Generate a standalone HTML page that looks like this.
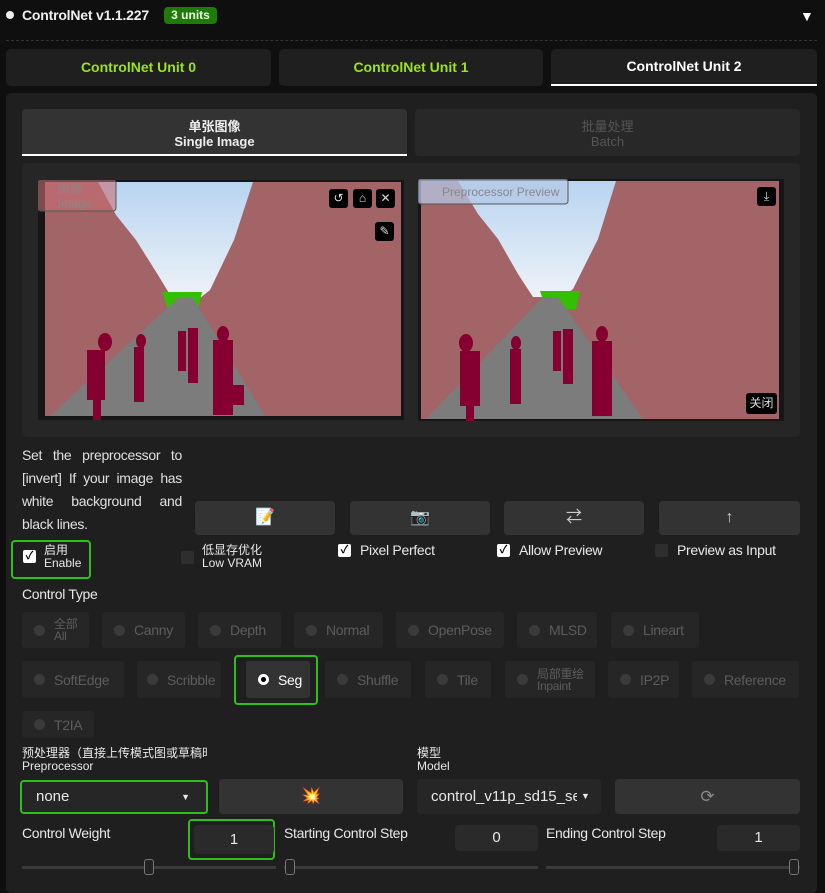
<!DOCTYPE html>
<html><head><meta charset="utf-8"><style>
*{box-sizing:border-box;margin:0;padding:0}
body{width:825px;height:881px;background:#0f0f0f;font-family:"Liberation Sans","Noto Sans CJK SC",sans-serif;color:#e8e8e8;position:relative;overflow:hidden}
.a{position:absolute}
.tab{position:absolute;top:49px;height:37px;background:#1f1f1f;border-radius:5px;color:#9be31a;font-weight:bold;font-size:14px;text-align:center;line-height:37px}
.btn{position:absolute;background:#333;border-radius:4px;text-align:center;color:#ccc}
.r{position:absolute;background:#262626;border-radius:3px;color:#5c5c5c;font-size:14px;letter-spacing:-0.3px;display:flex;align-items:center;padding-left:12px;white-space:nowrap;overflow:hidden}
.r i{display:inline-block;flex:none;width:11px;height:11px;border-radius:50%;background:#3a3a3a;margin-right:9px}
.cb{position:absolute;width:13px;height:13px;border-radius:2px;background:#fff;color:#000;font-size:11px;line-height:13px;text-align:center;font-weight:bold}
.cbo{position:absolute;width:13px;height:13px;border-radius:2px;background:#2e2e2e}
.lbl{position:absolute;font-size:14px;color:#e8e8e8;letter-spacing:-0.3px}
.inp{position:absolute;background:#2a2a2a;border-radius:4px;text-align:center;font-size:15px;line-height:26px}
.track{position:absolute;height:3px;background:#3a3a3a;top:866px}
.thumb{position:absolute;width:10px;height:16px;background:#222;border:1px solid #777;border-radius:3px;top:859px}
.icb{position:absolute;width:19px;height:19px;background:#000;border-radius:3px;color:#ddd;font-size:12px;text-align:center;line-height:19px}
</style></head><body>
<div class="a" style="left:6px;top:11px;width:8px;height:8px;border-radius:50%;background:#eee"></div>
<div class="a" style="left:22px;top:7px;font-size:14px;font-weight:bold;color:#eee;letter-spacing:-0.2px">ControlNet v1.1.227</div>
<div class="a" style="left:164px;top:7px;width:53px;height:17px;background:#1f7a0a;border-radius:4px;color:#e8ffe0;font-size:12px;font-weight:bold;text-align:center;line-height:17px">3 units</div>
<div class="a" style="left:800px;top:8px;font-size:14px;color:#fff">▼</div>
<div class="a" style="left:6px;top:40px;width:811px;border-top:1px dashed #333"></div>
<div class="tab" style="left:6px;width:265px">ControlNet Unit 0</div>
<div class="tab" style="left:279px;width:264px">ControlNet Unit 1</div>
<div class="tab" style="left:551px;width:266px;color:#fff;border-bottom:2px solid #fff;border-radius:5px 5px 0 0;line-height:35px">ControlNet Unit 2</div>
<div class="a" style="left:6px;top:93px;width:811px;height:800px;background:#1f1f1f;border-radius:5px"></div>
<div class="a" style="left:22px;top:109px;width:385px;height:47px;background:#333;border-bottom:2px solid #fff;border-radius:4px 4px 0 0;text-align:center;font-size:13px;font-weight:bold;line-height:15px;padding-top:10px;color:#eee">单张图像<br>Single Image</div>
<div class="a" style="left:415px;top:109px;width:385px;height:47px;background:#282828;border-radius:4px;text-align:center;font-size:13px;line-height:15px;padding-top:10px;color:#555">批量处理<br>Batch</div>
<div class="a" style="left:22px;top:163px;width:778px;height:274px;background:#262626;border-radius:5px"></div>
<svg class="a" style="left:38px;top:180px" width="366" height="240">
<defs><linearGradient id="s" x1="0" y1="0" x2="0" y2="1"><stop offset="0" stop-color="#b8d4f0"/><stop offset="1" stop-color="#eef2f8"/></linearGradient></defs>
<rect x="0" y="0" width="366" height="240" fill="#161616"/>
<rect x="7" y="2" width="356" height="234" fill="#a26466"/>
<polygon points="60,2 215,2 196,60 172,110 162,118 134,118 120,95 98,60 78,35" fill="url(#s)"/>
<polygon points="124,112 164,112 160,130 130,130" fill="#33c000"/>
<polygon points="12,236 140,118 155,118 227,236" fill="#7c7c7c"/>
<g fill="#850030"><ellipse cx="67" cy="162" rx="7" ry="9"/><rect x="49" y="170" width="18" height="50"/><rect x="55" y="215" width="8" height="35"/>
<ellipse cx="103" cy="161" rx="5" ry="7"/><rect x="96" y="167" width="10" height="55"/>
<rect x="140" y="151" width="8" height="40"/><rect x="150" y="148" width="10" height="55"/>
<ellipse cx="185" cy="154" rx="6" ry="8"/><rect x="175" y="160" width="20" height="75"/><rect x="193" y="205" width="13" height="20"/></g>
<rect x="0" y="0" width="78" height="31" fill="rgba(200,110,115,.6)" stroke="#555" rx="3"/>
<text x="20" y="13" font-size="12" fill="#888">图像</text><text x="20" y="27" font-size="12" fill="#888">Image</text>
</svg>
<div class="icb" style="left:329px;top:189px">↺</div><div class="icb" style="left:353px;top:189px">⌂</div><div class="icb" style="left:376px;top:189px">✕</div>
<div class="icb" style="left:375px;top:222px">✎</div>
<svg class="a" style="left:418px;top:179px" width="366" height="242">
<rect x="0" y="0" width="366" height="242" fill="#161616"/>
<rect x="3" y="2" width="358" height="238" fill="#a26466"/>
<polygon points="40,2 198,2 180,60 155,110 145,118 115,118 100,95 80,60 60,35" fill="url(#s)"/>
<polygon points="122,112 162,112 158,130 128,130" fill="#33c000"/>
<polygon points="8,240 125,118 140,118 225,240" fill="#7c7c7c"/>
<g fill="#850030"><ellipse cx="48" cy="164" rx="7" ry="9"/><rect x="42" y="172" width="20" height="55"/><rect x="48" y="220" width="8" height="25"/>
<ellipse cx="98" cy="164" rx="5" ry="7"/><rect x="92" y="170" width="11" height="55"/>
<rect x="135" y="152" width="8" height="40"/><rect x="145" y="150" width="10" height="55"/>
<ellipse cx="184" cy="155" rx="6" ry="8"/><rect x="174" y="162" width="20" height="75"/></g>
<rect x="0" y="0" width="150" height="25" fill="rgba(180,200,230,.75)" stroke="#555" rx="3"/>
<text x="24" y="17" font-size="12" fill="#888">Preprocessor Preview</text>
</svg>
<div class="icb" style="left:757px;top:187px">⤓</div>
<div class="icb" style="left:746px;top:393px;width:31px;height:21px;line-height:21px">关闭</div>
<div class="a" style="left:22px;top:444px;width:160px;font-size:14px;line-height:23px;text-align:justify;color:#e0e0e0;letter-spacing:-0.3px">Set the preprocessor to [invert] If your image has white background and black lines.</div>
<div class="btn" style="left:195px;top:501px;width:140px;height:34px;line-height:34px">📝</div>
<div class="btn" style="left:350px;top:501px;width:140px;height:34px;line-height:34px">📷</div>
<div class="btn" style="left:504px;top:501px;width:140px;height:34px;line-height:34px">⇄</div>
<div class="btn" style="left:659px;top:501px;width:141px;height:34px;line-height:34px">↑</div>
<div class="a" style="left:11px;top:540px;width:80px;height:39px;border:2px solid #2fbf1a;border-radius:4px"></div>
<div class="cb" style="left:23px;top:550px">✓</div>
<div class="a" style="left:44px;top:544px;font-size:12px;line-height:13px">启用<br>Enable</div>
<div class="cbo" style="left:181px;top:551px"></div>
<div class="a" style="left:202px;top:544px;font-size:12px;line-height:13px">低显存优化<br>Low VRAM</div>
<div class="cb" style="left:338px;top:544px">✓</div><div class="lbl" style="left:360px;top:542px">Pixel Perfect</div>
<div class="cb" style="left:497px;top:544px">✓</div><div class="lbl" style="left:519px;top:542px">Allow Preview</div>
<div class="cbo" style="left:655px;top:544px"></div><div class="lbl" style="left:677px;top:542px">Preview as Input</div>
<div class="lbl" style="left:22px;top:586px">Control Type</div>
<div class="r" style="left:22px;top:612px;width:67px;height:36px"><i></i><span style="font-size:12px;line-height:12px">全部<br>All</span></div>
<div class="r" style="left:102px;top:612px;width:83px;height:36px"><i></i>Canny</div>
<div class="r" style="left:198px;top:612px;width:83px;height:36px"><i></i>Depth</div>
<div class="r" style="left:294px;top:612px;width:89px;height:36px"><i></i>Normal</div>
<div class="r" style="left:396px;top:612px;width:108px;height:36px"><i></i>OpenPose</div>
<div class="r" style="left:517px;top:612px;width:80px;height:36px"><i></i>MLSD</div>
<div class="r" style="left:611px;top:612px;width:88px;height:36px"><i></i>Lineart</div>
<div class="r" style="left:22px;top:661px;width:102px;height:37px"><i></i>SoftEdge</div>
<div class="r" style="left:137px;top:661px;width:84px;height:37px;padding-left:10px"><i></i>Scribble</div>
<div class="a" style="left:234px;top:655px;width:84px;height:50px;border:2px solid #2fbf1a;border-radius:4px"></div>
<div class="r" style="left:246px;top:661px;width:64px;height:37px;background:#333;color:#fff"><i style="border:3px solid #fff;background:#000"></i>Seg</div>
<div class="r" style="left:325px;top:661px;width:86px;height:37px"><i></i>Shuffle</div>
<div class="r" style="left:425px;top:661px;width:66px;height:37px"><i></i>Tile</div>
<div class="r" style="left:505px;top:661px;width:90px;height:37px"><i></i><span style="font-size:12px;line-height:12px">局部重绘<br>Inpaint</span></div>
<div class="r" style="left:608px;top:661px;width:71px;height:37px"><i></i>IP2P</div>
<div class="r" style="left:692px;top:661px;width:107px;height:37px"><i></i>Reference</div>
<div class="r" style="left:22px;top:711px;width:72px;height:27px"><i></i>T2IA</div>
<div class="a" style="left:22px;top:747px;font-size:12px;line-height:13px;width:185px;overflow:hidden;white-space:nowrap">预处理器（直接上传模式图或草稿时<br>Preprocessor</div>
<div class="a" style="left:417px;top:747px;font-size:12px;line-height:13px">模型<br>Model</div>
<div class="a" style="left:20px;top:780px;width:188px;height:34px;border:2px solid #2fbf1a;border-radius:4px;background:#262626;font-size:15px;line-height:30px;padding-left:14px">none<span style="position:absolute;right:16px;font-size:9px">▼</span></div>
<div class="btn" style="left:219px;top:779px;width:184px;height:35px;line-height:35px;color:#f55">💥</div>
<div class="a" style="left:417px;top:779px;width:184px;height:35px;background:#262626;border-radius:4px;font-size:15px;line-height:35px;padding-left:14px;white-space:nowrap;overflow:hidden">control_v11p_sd15_se<span style="position:absolute;left:160px;top:0;background:#262626;padding-left:4px;width:24px;font-size:9px">▼</span></div>
<div class="btn" style="left:615px;top:779px;width:185px;height:35px;line-height:35px;font-size:17px;color:#888">⟳</div>
<div class="lbl" style="left:22px;top:825px">Control Weight</div>
<div class="a" style="left:188px;top:819px;width:87px;height:41px;border:2px solid #2fbf1a;border-radius:4px"></div>
<div class="inp" style="left:194px;top:825px;width:80px;height:29px;line-height:29px">1</div>
<div class="lbl" style="left:284px;top:825px">Starting Control Step</div>
<div class="inp" style="left:455px;top:825px;width:83px;height:26px">0</div>
<div class="lbl" style="left:546px;top:825px">Ending Control Step</div>
<div class="inp" style="left:717px;top:825px;width:83px;height:26px">1</div>
<div class="track" style="left:22px;width:254px"></div>
<div class="track" style="left:284px;width:254px"></div>
<div class="track" style="left:546px;width:254px"></div>
<div class="thumb" style="left:144px"></div>
<div class="thumb" style="left:285px"></div>
<div class="thumb" style="left:789px"></div>
</body></html>
